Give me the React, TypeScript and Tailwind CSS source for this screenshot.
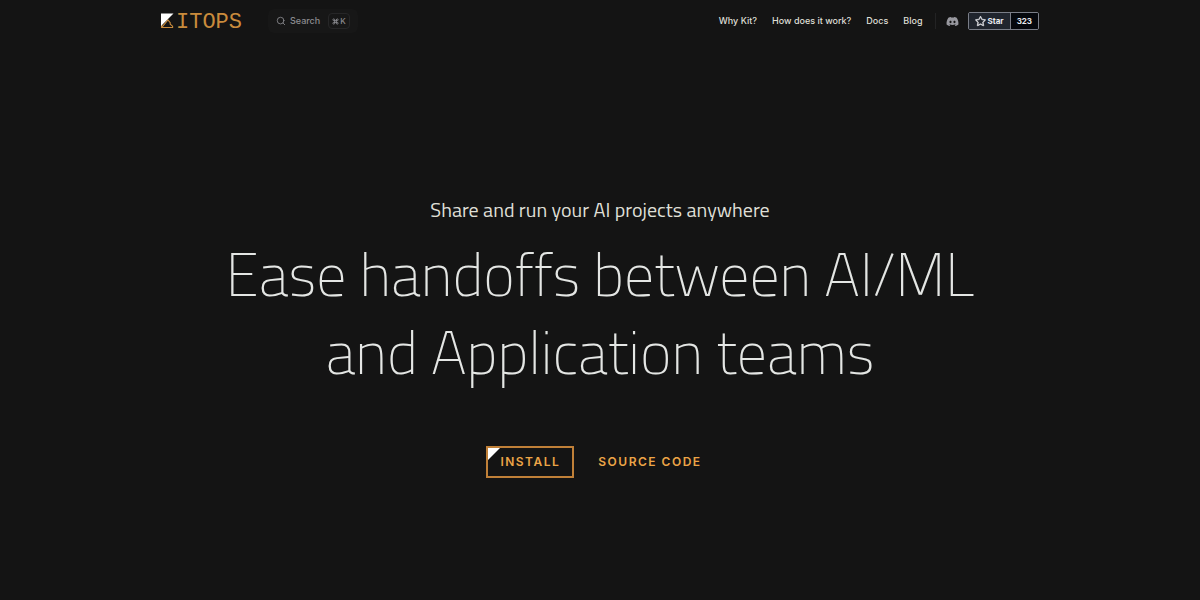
import { Command, Search } from "lucide-react";
import { FaDiscord } from "react-icons/fa";
import { GoStar } from "react-icons/go";

const navLinks = [
  { label: "Why Kit?", href: "#why" },
  { label: "How does it work?", href: "#how" },
  { label: "Docs", href: "#docs" },
  { label: "Blog", href: "#blog" },
];

function Logo() {
  return (
    <a href="#home" aria-label="KitOps home" className="flex items-center text-[#c98b3c]">
      <svg viewBox="0 0 15 16" className="h-4 w-[15px]" fill="none">
        <path d="M1 14.2L6.9 6.8L9.2 9.6V11.2L11.6 13.2V14.5H0.6V11" stroke="currentColor" strokeWidth="1.1" />
        <path d="M0 0.5H12.5L0 13Z" fill="#fff" />
      </svg>
      <span className="pt-1 font-['Liberation_Mono',monospace] text-[22px] leading-6">ITOPS</span>
    </a>
  );
}

function SearchButton() {
  return (
    <button className="ml-[26px] flex h-6 items-center rounded-md bg-[#171717] px-2 text-[#8c8c90]">
      <Search className="h-[10px] w-[10px]" strokeWidth={2} />
      <span className="ml-1 text-[9px] font-medium">Search</span>
      <kbd className="ml-2 flex h-4 items-center gap-px rounded border border-[#262627] px-[3px] font-['Inter',sans-serif] text-[8px] font-medium">
        <Command className="h-[7px] w-[7px]" strokeWidth={3} />
        <span>K</span>
      </kbd>
    </button>
  );
}

function Header() {
  return (
    <header className="px-6 pt-[9px] pb-2">
      <div className="mx-auto flex h-6 max-w-[878px] items-center">
        <Logo />
        <SearchButton />
        <nav className="ml-auto flex items-center gap-[15px] text-[9px] font-medium text-[#dfdfd6]">
          {navLinks.map((link) => (
            <a key={link.label} href={link.href} className="hover:text-[#eca547]">
              {link.label}
            </a>
          ))}
        </nav>
        <span className="ml-3 h-4 w-px bg-[#232324]" />
        <a href="#discord" aria-label="Discord" className="ml-[10px] text-[#98989f]">
          <FaDiscord className="h-[13px] w-[13px]" />
        </a>
        <div className="ml-[9px] flex h-[18px] overflow-hidden rounded-xs border border-[#7a7e88] text-[8px] font-bold text-[#e8eaee]">
          <a href="#star" className="flex items-center gap-[2px] bg-[#20252e] px-[6px]">
            <GoStar className="h-[11px] w-[11px]" strokeWidth={1} />
            <span>Star</span>
          </a>
          <a href="#stargazers" className="flex items-center border-l border-[#7a7e88] bg-[#05080d] px-[6px]">
            323
          </a>
        </div>
      </div>
    </header>
  );
}

function Hero() {
  return (
    <main className="px-6 pt-[153px] text-center">
      <p className="font-['Titillium_Web','Open_Sans',sans-serif] text-[20px] leading-8 text-[#dfdfd6]">
        Share and run your AI projects anywhere
      </p>
      <h1 className="mx-auto mt-[9px] max-w-[800px] font-['Titillium_Web','Roboto',sans-serif] text-[60px] leading-[78px] font-extralight text-[#e4e6e4]">
        Ease handoffs between AI/ML and Application teams
      </h1>
      <div className="mt-[55px] flex justify-center gap-[10px] text-[12px] font-semibold tracking-[1.5px] text-[#eca547] uppercase">
        <a href="#install" className="relative flex h-8 items-center border-2 border-[#c08038] px-3">
          <svg viewBox="0 0 12 12" className="absolute top-0 left-0 h-3 w-3">
            <path d="M0 0H12L0 12Z" fill="#fff" />
          </svg>
          Install
        </a>
        <a href="#source" className="flex h-8 items-center pr-3 pl-[14px]">
          Source code
        </a>
      </div>
    </main>
  );
}

export default function App() {
  return (
    <div className="min-h-screen bg-[#141414] font-['Inter',sans-serif]">
      <Header />
      <Hero />
    </div>
  );
}
